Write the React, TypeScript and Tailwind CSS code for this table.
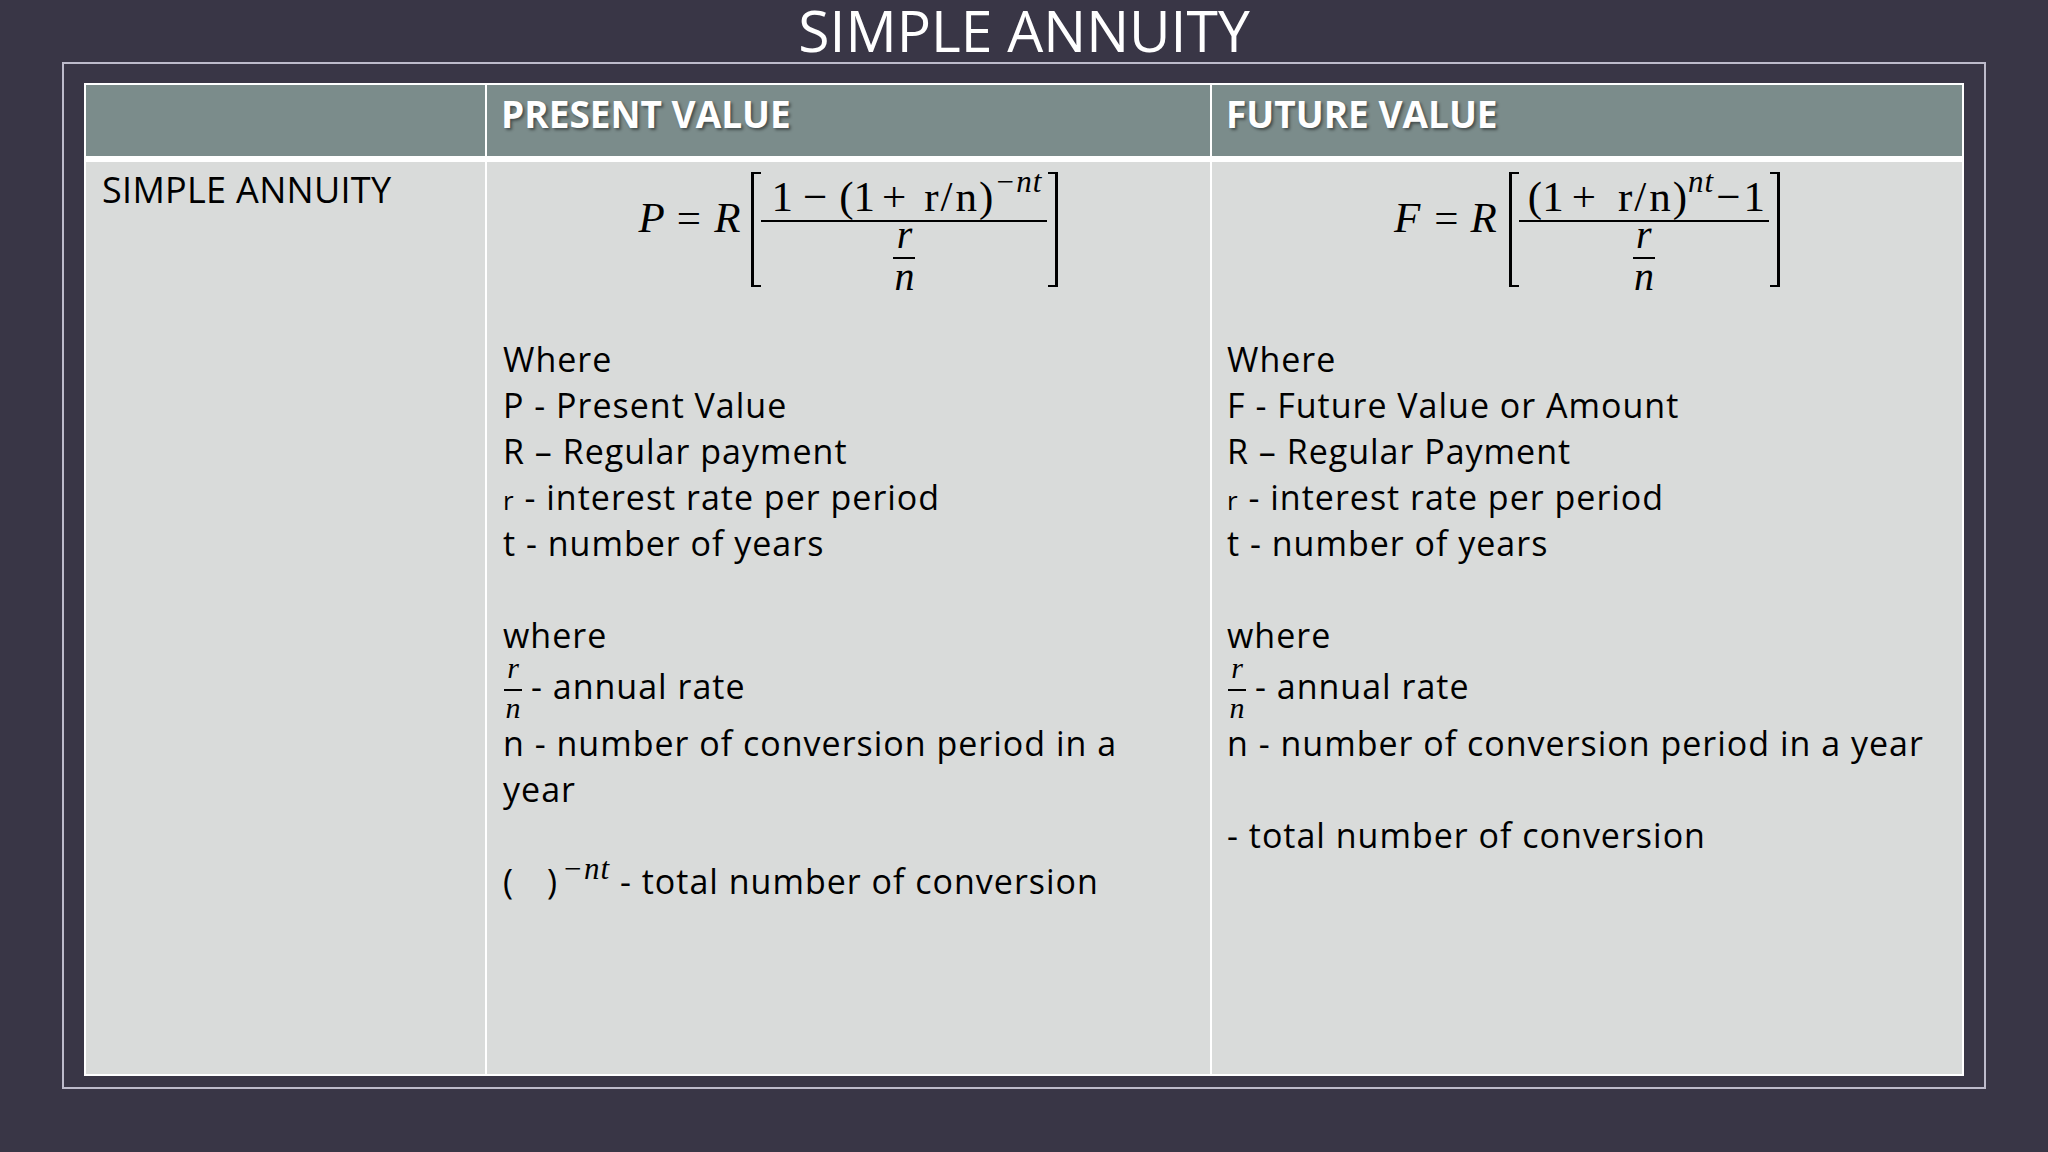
import React from "react";

const Line = ({ children }: { children?: React.ReactNode }) => (
  <div className="h-[46px] whitespace-nowrap leading-[46px]">{children}</div>
);

const SmallR = () => <span className="text-[26px]">r</span>;

const InlineFrac = () => (
  <div className="flex h-[62px] items-start">
    <div className="flex w-[20px] flex-col items-center font-['Liberation_Serif',serif] text-[30px] italic tracking-normal">
      <div className="h-[20px] leading-[20px]">r</div>
      <div className="mt-[11px] h-[2px] w-[18px] bg-black" />
      <div className="mt-[7px] h-[20px] leading-[20px]">n</div>
    </div>
    <div className="ml-[8px] mt-[5px] h-[46px] whitespace-nowrap leading-[46px]">- annual rate</div>
  </div>
);

const LBracket = () => (
  <div className="h-[115px] w-[10px] border-y-2 border-l-[3px] border-black" />
);
const RBracket = () => (
  <div className="h-[115px] w-[10px] border-y-2 border-r-[3px] border-black" />
);

const Denominator = () => (
  <div className="flex flex-col items-center italic">
    <div className="mt-[1px] h-[24px] text-[40px] leading-[24px]">r</div>
    <div className="mt-[10px] h-[2px] w-[22px] bg-black" />
    <div className="mt-[6px] h-[24px] text-[40px] leading-[24px]">n</div>
  </div>
);

const PresentFormula = () => (
  <div className="flex items-start justify-center font-['Liberation_Serif',serif] text-[43px] tracking-normal">
    <div className="mt-[25px] flex h-[42px] items-baseline whitespace-nowrap leading-[42px]">
      <span className="italic">P</span>
      <span className="ml-[12px]">=</span>
      <span className="ml-[13px] italic">R</span>
    </div>
    <div className="ml-[11px] flex items-start">
      <LBracket />
      <div className="flex flex-col pt-[4px]">
        <div className="flex h-[42px] items-baseline whitespace-nowrap pl-[10px] pr-[5px] leading-[42px]">
          <span>1</span>
          <span className="ml-[10px]">−</span>
          <span className="ml-[12px]">(</span>
          <span>1</span>
          <span className="ml-[7px]">+</span>
          <span className="ml-[18px]">r</span>
          <span className="ml-[2px]">/</span>
          <span className="ml-[3px]">n</span>
          <span className="ml-[2px]">)</span>
          <span className="ml-[1px] inline-block -translate-y-[19px] text-[31px] italic leading-none tracking-[1px]">−nt</span>
        </div>
        <div className="mt-[2px] h-[2px] w-full bg-black" />
        <Denominator />
      </div>
      <div className="ml-[1px]">
        <RBracket />
      </div>
    </div>
  </div>
);

const FutureFormula = () => (
  <div className="flex items-start justify-center font-['Liberation_Serif',serif] text-[43px] tracking-normal">
    <div className="mt-[25px] flex h-[42px] items-baseline whitespace-nowrap leading-[42px]">
      <span className="italic">F</span>
      <span className="ml-[14px]">=</span>
      <span className="ml-[12px] italic">R</span>
    </div>
    <div className="ml-[12px] flex items-start">
      <LBracket />
      <div className="flex flex-col pt-[4px]">
        <div className="flex h-[42px] items-baseline whitespace-nowrap pl-[9px] pr-[4px] leading-[42px]">
          <span>(</span>
          <span>1</span>
          <span className="ml-[8px]">+</span>
          <span className="ml-[22px]">r</span>
          <span className="ml-[2px]">/</span>
          <span className="ml-[3px]">n</span>
          <span className="ml-[2px]">)</span>
          <span className="ml-[1px] inline-block -translate-y-[19px] text-[31px] italic leading-none tracking-[1px]">nt</span>
          <span className="ml-[2px]">−</span>
          <span className="ml-[3px]">1</span>
        </div>
        <div className="mt-[2px] h-[2px] w-full bg-black" />
        <Denominator />
      </div>
      <div className="ml-[1px]">
        <RBracket />
      </div>
    </div>
  </div>
);

export default function App() {
  return (
    <div className="flex h-[1152px] w-[2048px] flex-col bg-[#393646] font-['Open_Sans',sans-serif]">
      <div className="flex h-[62px] justify-center">
        <h1 className="pt-[2px] text-[57px] font-normal leading-none text-white">SIMPLE ANNUITY</h1>
      </div>
      <div className="ml-[62px] flex h-[1027px] w-[1924px] border-2 border-[#bdbbcb] px-[20px] pb-[11px] pt-[19px]">
        <div className="flex flex-1 flex-col border-2 border-white">
          <div className="flex h-[77px] border-b-[6px] border-white bg-[#7b8c8b] text-[37px] font-bold leading-none text-white [text-shadow:2px_2px_3px_rgba(0,0,0,0.45)]">
            <div className="w-[399px]" />
            <div className="w-[725px] border-l-2 border-white pl-[14px] pt-[10px]">PRESENT VALUE</div>
            <div className="flex-1 border-l-2 border-white pl-[14px] pt-[10px]">FUTURE VALUE</div>
          </div>
          <div className="flex flex-1 bg-[#d9dbda] text-black">
            <div className="w-[399px] pl-[16px] pt-[5px]">
              <div className="h-[46px] whitespace-nowrap text-[36px] leading-[46px] tracking-[0.3px]">SIMPLE ANNUITY</div>
            </div>
            <div className="w-[725px] border-l-2 border-white pt-[10px]">
              <PresentFormula />
              <div className="mt-[47px] pl-[16px] text-[34px] tracking-[1px]">
                <Line>Where</Line>
                <Line>P - Present Value</Line>
                <Line>R – Regular payment</Line>
                <Line>
                  <SmallR /> - interest rate per period
                </Line>
                <Line>t - number of years</Line>
                <Line />
                <Line>where</Line>
                <InlineFrac />
                <Line>n - number of conversion period in a</Line>
                <Line>year</Line>
                <Line />
                <Line>
                  <span>(</span>
                  <span className="inline-block w-[33px]" />
                  <span>)</span>
                  <span className="ml-[4px] inline-block -translate-y-[15px] font-['Liberation_Serif',serif] text-[31px] italic leading-none tracking-[1px]">−nt</span>
                  <span> - total number of conversion</span>
                </Line>
              </div>
            </div>
            <div className="flex-1 border-l-2 border-white pt-[10px]">
              <FutureFormula />
              <div className="mt-[47px] pl-[15px] text-[34px] tracking-[1px]">
                <Line>Where</Line>
                <Line>F - Future Value or Amount</Line>
                <Line>R – Regular Payment</Line>
                <Line>
                  <SmallR /> - interest rate per period
                </Line>
                <Line>t - number of years</Line>
                <Line />
                <Line>where</Line>
                <InlineFrac />
                <Line>n - number of conversion period in a year</Line>
                <Line />
                <Line>- total number of conversion</Line>
              </div>
            </div>
          </div>
        </div>
      </div>
    </div>
  );
}
